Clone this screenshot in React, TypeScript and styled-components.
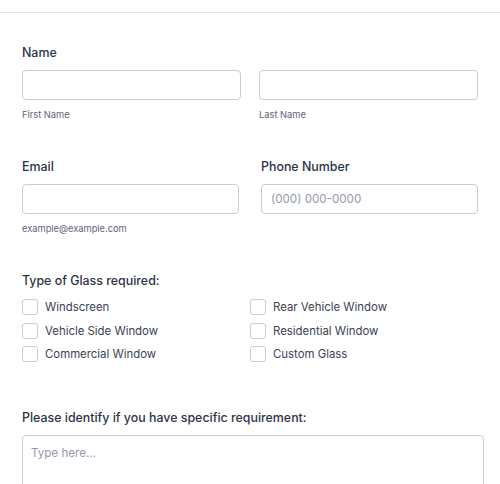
import React from 'react';
import styled, { createGlobalStyle } from 'styled-components';

const GlobalStyle = createGlobalStyle`
  html, body {
    margin: 0;
    padding: 0;
    background: #ffffff;
  }
  body {
    font-family: Inter, "Noto Sans", sans-serif;
    color: #2c3345;
    -webkit-font-smoothing: antialiased;
  }
  * {
    box-sizing: border-box;
  }
`;

const glassTypes = [
  'Windscreen',
  'Rear Vehicle Window',
  'Vehicle Side Window',
  'Residential Window',
  'Commercial Window',
  'Custom Glass',
];

const App: React.FC = () => {
  return (
    <Page>
      <GlobalStyle />
      <TopBar />
      <Form>
        <Field top={30}>
          <Label>Name</Label>
          <TwoCols gap={18}>
            <div>
              <Input type="text" />
              <SubLabel>First Name</SubLabel>
            </div>
            <div>
              <Input type="text" />
              <SubLabel>Last Name</SubLabel>
            </div>
          </TwoCols>
        </Field>

        <TwoCols gap={22}>
          <Field top={35}>
            <Label>Email</Label>
            <Input type="email" />
            <SubLabel>example@example.com</SubLabel>
          </Field>
          <Field top={35}>
            <Label>Phone Number</Label>
            <Input type="tel" placeholder="(000) 000-0000" />
          </Field>
        </TwoCols>

        <Field top={35}>
          <Label>Type of Glass required:</Label>
          <CheckGrid>
            {glassTypes.map(type => (
              <CheckRow key={type}>
                <CheckBox type="checkbox" />
                <CheckText>{type}</CheckText>
              </CheckRow>
            ))}
          </CheckGrid>
        </Field>

        <Field top={46}>
          <Label>Please identify if you have specific requirement:</Label>
          <TextArea placeholder="Type here..." />
        </Field>
      </Form>
    </Page>
  );
};

export default App;

const Page = styled.div`
  width: 500px;
  height: 484px;
  overflow: hidden;
  background: #ffffff;
`;

const TopBar = styled.div`
  height: 13px;
  border-bottom: 1px solid #e3e5ea;
`;

const Form = styled.div`
  padding: 0 22px;
`;

const Field = styled.div<{ top: number }>`
  margin-top: ${p => p.top}px;
`;

const Label = styled.div`
  font-size: 12.4px;
  font-weight: 450;
  line-height: 20px;
  color: #2c3345;
  margin-bottom: 7px;
`;

const TwoCols = styled.div<{ gap: number }>`
  display: grid;
  grid-template-columns: 1fr 1fr;
  column-gap: ${p => p.gap}px;
`;

const Input = styled.input`
  display: block;
  width: 100%;
  height: 30px;
  padding: 0 9px;
  border: 1px solid #c9cbdb;
  border-radius: 4px;
  background: #ffffff;
  font-family: Inter, sans-serif;
  font-size: 11.6px;
  color: #2c3345;
  outline: none;

  &::placeholder {
    color: #949aab;
  }
`;

const SubLabel = styled.div`
  margin-top: 8px;
  font-size: 9.3px;
  line-height: 14px;
  color: #5c6478;
`;

const CheckGrid = styled.div`
  display: grid;
  grid-template-columns: 1fr 1fr;
  row-gap: 7.5px;
  padding-top: 1px;
`;

const CheckRow = styled.label`
  display: flex;
  align-items: center;
  gap: 7px;
  height: 16px;
`;

const CheckBox = styled.input`
  appearance: none;
  margin: 0;
  width: 16px;
  height: 16px;
  flex: none;
  border: 1px solid #c9cbdb;
  border-radius: 3px;
  background: #ffffff;
`;

const CheckText = styled.span`
  font-size: 11.4px;
  color: #3a4254;
  white-space: nowrap;
`;

const TextArea = styled.textarea`
  display: block;
  width: calc(100% + 6px);
  height: 90px;
  padding: 8px 8px;
  border: 1px solid #c9cbdb;
  border-radius: 4px;
  resize: none;
  font-family: Inter, sans-serif;
  font-size: 11.6px;
  line-height: 18px;
  color: #2c3345;
  outline: none;

  &::placeholder {
    color: #949aab;
  }
`;
